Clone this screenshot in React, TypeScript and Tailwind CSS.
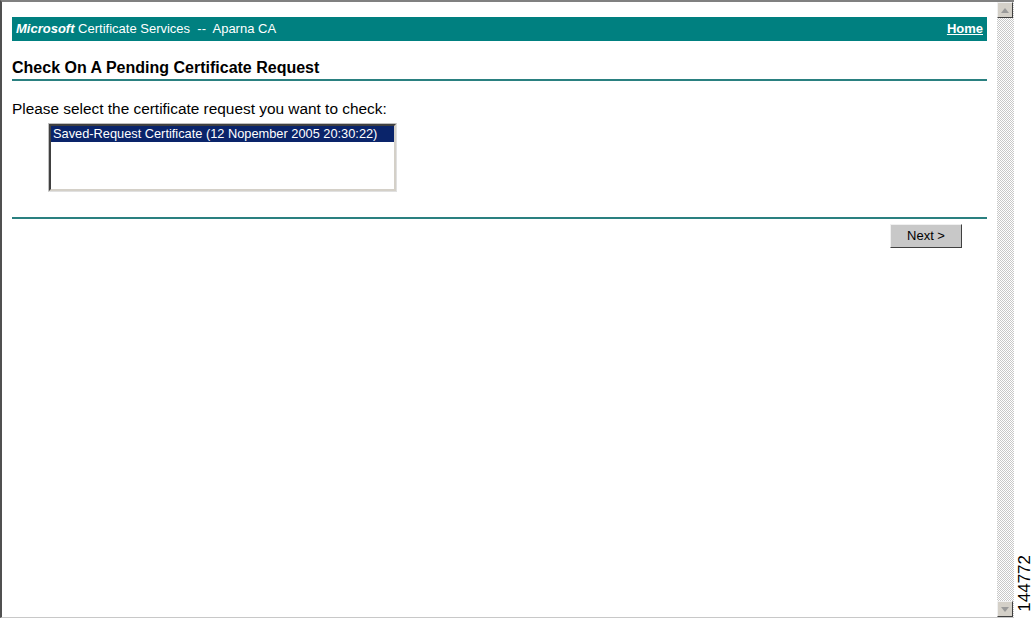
import React from "react";

const arial = { fontFamily: '"Liberation Sans", Arial, sans-serif' };

function ScrollButton({ dir }: { dir: "up" | "down" }) {
  return (
    <div className="w-[16px] h-[16px] bg-[#d4d0c8] border border-t-[#f0f0f0] border-l-[#f0f0f0] border-b-[#404040] border-r-[#404040] flex items-center justify-center">
      <svg width="8" height="5" viewBox="0 0 8 5">
        {dir === "up" ? (
          <polygon points="0,5 8,5 4,0" fill="#9a9a9a" />
        ) : (
          <polygon points="0,0 8,0 4,5" fill="#9a9a9a" />
        )}
      </svg>
    </div>
  );
}

export default function App() {
  return (
    <div className="w-[1035px] h-[619px] bg-white flex overflow-hidden" style={arial}>
      <div className="w-[1014px] h-[618px] border-l-2 border-t-2 border-b border-l-[#505050] border-t-[#808080] border-b-[#c8c8c8] flex">
        <div className="flex-1 px-[10px] pt-[15px]">
          <div className="h-[24px] bg-[#008080] flex items-center justify-between px-[4px] text-white text-[13px]">
            <div>
              <span className="font-bold italic">Microsoft</span>
              <span> Certificate Services&nbsp; --&nbsp; Aparna CA</span>
            </div>
            <span className="font-bold underline">Home</span>
          </div>
          <div className="mt-[18px] text-[16px] font-bold text-black leading-[18px]">
            Check On A Pending Certificate Request
          </div>
          <div className="mt-[2px] h-[2px] bg-[#2a8080]" />
          <div className="mt-[19px] text-[15.4px] text-black leading-[18px]">
            Please select the certificate request you want to check:
          </div>
          <div className="ml-[36px] mt-[5px] w-[349px] h-[69px] border border-t-[#c0c0c0] border-l-[#c0c0c0] border-b-[#e0e0e0] border-r-[#e0e0e0]">
            <div className="h-full border-2 border-t-[#404040] border-l-[#404040] border-b-[#d4d0c8] border-r-[#d4d0c8] bg-white">
              <div className="h-[16px] bg-[#0a246a] text-white text-[12.8px] leading-[16px] pl-[2px]">
                Saved-Request Certificate (12 Nopember 2005 20:30:22)
              </div>
            </div>
          </div>
          <div className="mt-[25px] h-[2px] bg-[#2a8080]" />
          <div className="flex justify-end pr-[25px] mt-[5px]">
            <div className="w-[72px] h-[24px] bg-[#c8c8c8] border border-t-[#f0f0f0] border-l-[#f0f0f0] border-b-[#404040] border-r-[#404040] flex items-center justify-center text-[13px] text-black">
              Next &gt;
            </div>
          </div>
        </div>
        <div className="w-[17px] h-full flex flex-col justify-between bg-[repeating-conic-gradient(#c8c8c8_0_25%,#ffffff_0_50%)] bg-[length:2px_2px]">
          <ScrollButton dir="up" />
          <ScrollButton dir="down" />
        </div>
      </div>
      <div className="flex-1 flex flex-col justify-end items-center pb-[7px]">
        <div className="[writing-mode:vertical-rl] rotate-180 text-[17px] leading-[17px] text-black">
          144772
        </div>
      </div>
    </div>
  );
}
